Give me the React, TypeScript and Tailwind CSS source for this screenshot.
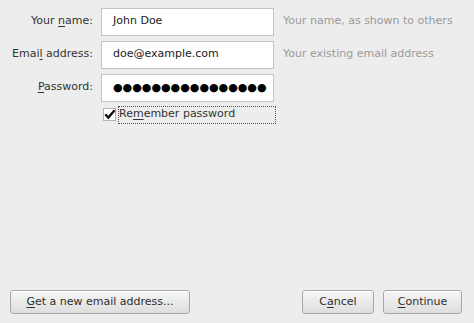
import React from "react";

function U({ children }: { children: React.ReactNode }) {
  return <span className="underline underline-offset-2">{children}</span>;
}

function Btn({ children, className }: { children: React.ReactNode; className: string }) {
  return (
    <div
      className={`h-[24px] flex items-center justify-center rounded-[3px] border border-[#a8a8a8] bg-gradient-to-b from-[#f6f6f6] to-[#dedede] text-[#2e2e2e] shadow-[inset_0_1px_0_#ffffff] ${className}`}
    >
      {children}
    </div>
  );
}

export default function App() {
  return (
    <div
      className="w-[474px] h-[323px] bg-[#ededed] flex flex-col text-[11px] text-[#333333]"
      style={{ fontFamily: '"DejaVu Sans", sans-serif' }}
    >
      <div className="flex flex-col pt-[7px]">
        <div className="flex items-center h-[29px]">
          <div className="w-[93px] text-right">
            Your <U>n</U>ame:
          </div>
          <div className="ml-[8px] w-[173px] h-[28px] bg-white border border-[#c4c4c4] flex items-center pl-[11px] text-[#1a1a1a]">
            John Doe
          </div>
          <div className="ml-[9px] text-[#9a9a9a]">Your name, as shown to others</div>
        </div>
        <div className="flex items-center h-[29px] mt-[4px]">
          <div className="w-[93px] text-right">
            Emai<U>l</U> address:
          </div>
          <div className="ml-[8px] w-[173px] h-[28px] bg-white border border-[#c4c4c4] flex items-center pl-[11px] text-[#1a1a1a]">
            doe@example.com
          </div>
          <div className="ml-[9px] text-[#9a9a9a]">Your existing email address</div>
        </div>
        <div className="flex items-center h-[29px] mt-[4px]">
          <div className="w-[93px] text-right">
            <U>P</U>assword:
          </div>
          <div className="ml-[8px] w-[173px] h-[28px] bg-white border border-[#c4c4c4] flex items-center pl-[11px] text-[#000] text-[11px] leading-none">
            ●●●●●●●●●●●●●●●●
          </div>
        </div>
        <div className="flex items-center h-[19px] mt-[3px] ml-[103px]">
          <svg width="14" height="13" viewBox="0 0 14 13" className="shrink-0">
            <rect x="0.5" y="0.5" width="12" height="12" fill="#fff" stroke="#b4b4b4" />
            <path d="M2.3 6.3 L5.3 9.6 L11.6 2.2" fill="none" stroke="#111" strokeWidth="2.4" />
          </svg>
          <div className="ml-[1px] w-[158px] h-[18px] border border-dotted border-[#555] flex items-center text-[#333]">
            Re<U>m</U>ember password
          </div>
        </div>
      </div>
      <div className="mt-auto mb-[9px] flex items-center px-[10px]">
        <Btn className="w-[180px]">
          <U>G</U>et a new email address...
        </Btn>
        <div className="flex-1" />
        <Btn className="w-[72px]">
          C<U>a</U>ncel
        </Btn>
        <Btn className="w-[79px] ml-[9px] mr-[2px]">
          <U>C</U>ontinue
        </Btn>
      </div>
    </div>
  );
}
